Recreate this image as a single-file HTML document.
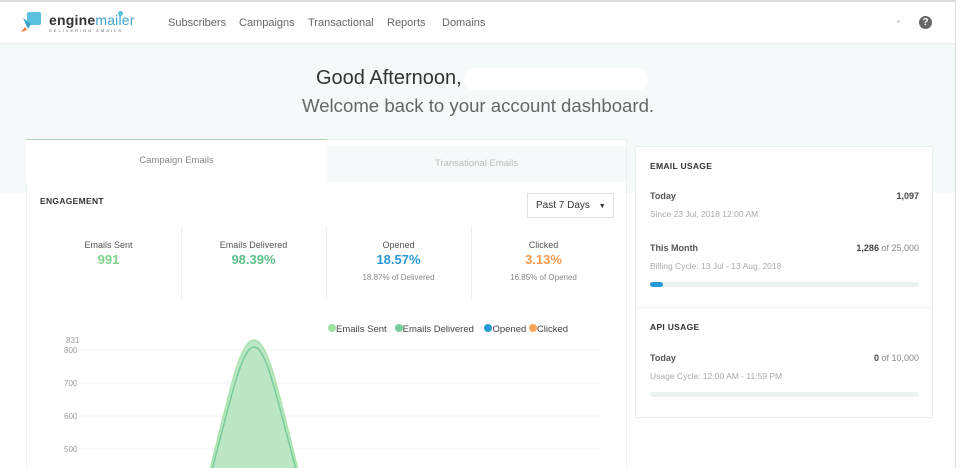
<!DOCTYPE html>
<html><head><style>
*{margin:0;padding:0;box-sizing:border-box}
html,body{width:960px;height:468px;overflow:hidden}
body{background:#fff;font-family:"Liberation Sans",sans-serif;position:relative;color:#555}
.abs{position:absolute}
</style></head><body>
<div class="abs" style="left:0;top:0;width:960px;height:2px;background:#ddd"></div>
<div class="abs" style="left:0;top:2px;width:960px;height:42px;background:#fff;border-bottom:1px solid #e8eef0"></div>
<div class="abs" style="left:0;top:44px;width:960px;height:149px;background:#f5f9fa"></div>
<div class="abs" style="left:955px;top:0;width:5px;height:468px;background:#fff;border-left:1px solid #ddd"></div>
<svg class="abs" style="left:18px;top:10px" width="28" height="26"><rect x="9" y="2" width="14" height="13" rx="2" fill="#5bc0de"/><path d="M5 8 L13 14 L10 19 Z" fill="#3aa4cc"/><path d="M3 22 L7 17 L9 20 Z" fill="#f07a3a"/></svg>
<div class="abs" style="left:49px;top:12px;font-size:14px;font-weight:bold;color:#333;letter-spacing:0.2px">engine<span style="color:#3aa4cc;font-weight:normal">mailer</span></div>
<div class="abs" style="left:118px;top:11px;width:5px;height:5px;border-radius:50%;background:#5bc0de"></div>
<div class="abs" style="left:49px;top:28px;font-size:4px;letter-spacing:2px;color:#666">DELIVERING EMAILS</div>
<div class="abs" style="top:17px;left:168px;font-size:11px;color:#666">
<span style="position:absolute;left:0">Subscribers</span><span style="position:absolute;left:71px">Campaigns</span><span style="position:absolute;left:140px">Transactional</span><span style="position:absolute;left:219px">Reports</span><span style="position:absolute;left:274px">Domains</span></div>
<div class="abs" style="left:897px;top:21px;width:3px;height:1px;background:#999;transform:rotate(-40deg)"></div>
<div class="abs" style="left:919px;top:16px;width:13px;height:13px;border-radius:50%;background:#666;color:#fff;font-size:10px;font-weight:bold;text-align:center;line-height:13px">?</div>
<div class="abs" style="left:316px;top:67px;font-size:20px;color:#333">Good Afternoon,</div>
<div class="abs" style="left:464px;top:68px;width:184px;height:22px;background:#fff;border-radius:10px"></div>
<div class="abs" style="left:302px;top:95px;font-size:18.6px;color:#666">Welcome back to your account dashboard.</div>
<div class="abs" style="left:26px;top:139px;width:601px;height:340px;background:#fff;border:1px solid #eceff0"></div>
<div class="abs" style="left:26px;top:139px;width:301px;height:44px;background:#fff;border-top:1px solid #a8d8b0;text-align:center;font-size:9.5px;color:#888;line-height:42px">Campaign Emails</div>
<div class="abs" style="left:327px;top:146px;width:299px;height:36px;background:#f5f9fa;text-align:center;font-size:9.5px;color:#bbb;line-height:36px">Transational Emails</div>
<div class="abs" style="left:40px;top:196px;font-size:8.5px;font-weight:bold;color:#333;letter-spacing:0.3px">ENGAGEMENT</div>
<div class="abs" style="left:527px;top:193px;width:87px;height:25px;border:1px solid #e2e2e2;font-size:10px;color:#333;line-height:23px;padding-left:8px">Past 7 Days <span style="font-size:7px;margin-left:6px">▼</span></div>
<div class="abs" style="left:181px;top:226px;width:1px;height:74px;background:#eee"></div>
<div class="abs" style="left:326px;top:226px;width:1px;height:74px;background:#eee"></div>
<div class="abs" style="left:471px;top:226px;width:1px;height:74px;background:#eee"></div>
<div class="abs" style="left:36px;top:240px;width:145px;text-align:center"><div style="font-size:9px;color:#555">Emails Sent</div><div style="font-size:13px;font-weight:bold;color:#7fd38a;margin-top:2px">991</div></div>
<div class="abs" style="left:181px;top:240px;width:145px;text-align:center"><div style="font-size:9px;color:#555">Emails Delivered</div><div style="font-size:13px;font-weight:bold;color:#5cc08a;margin-top:2px">98.39%</div></div>
<div class="abs" style="left:326px;top:240px;width:145px;text-align:center"><div style="font-size:9px;color:#555">Opened</div><div style="font-size:13px;font-weight:bold;color:#2a9ad6;margin-top:2px">18.57%</div><div style="font-size:8px;color:#888;margin-top:6px">18.87% of Delivered</div></div>
<div class="abs" style="left:471px;top:240px;width:145px;text-align:center"><div style="font-size:9px;color:#555">Clicked</div><div style="font-size:13px;font-weight:bold;color:#f79a50;margin-top:2px">3.13%</div><div style="font-size:8px;color:#888;margin-top:6px">16.85% of Opened</div></div>
<div class="abs" style="left:328px;top:324px;font-size:9.5px;color:#444;white-space:nowrap">
<span style="display:inline-block;width:8px;height:8px;border-radius:50%;background:#9de3a0"></span>Emails Sent &nbsp;&nbsp;<span style="display:inline-block;width:8px;height:8px;border-radius:50%;background:#77cc99"></span>Emails Delivered &nbsp;&nbsp;&nbsp;<span style="display:inline-block;width:8px;height:8px;border-radius:50%;background:#2a9ad6"></span>Opened <span style="display:inline-block;width:8px;height:8px;border-radius:50%;background:#f9a55a"></span>Clicked</div>
<svg class="abs" style="left:30px;top:330px" width="580" height="140">
<g font-family="Liberation Sans" font-size="8" fill="#999">
<text x="36" y="13">831</text><text x="34" y="23">800</text><text x="34" y="56">700</text><text x="34" y="89">600</text><text x="34" y="122">500</text></g>
<g stroke="#f0f0f0"><line x1="44" y1="20" x2="570" y2="20"/><line x1="44" y1="53" x2="570" y2="53"/><line x1="44" y1="86" x2="570" y2="86"/><line x1="44" y1="119" x2="570" y2="119"/></g>
<path d="M180 140 C200 60 210 10 224 10 C238 10 248 60 268 140 Z" fill="#bce6c6" stroke="#a8e4ac" stroke-width="1.5"/>
<path d="M182 140 C202 64 212 17 224 17 C236 17 246 64 266 140" fill="none" stroke="#77cc99" stroke-width="1.5"/>
</svg>
<div class="abs" style="left:635px;top:146px;width:298px;height:272px;background:#fff;border:1px solid #eceff0"></div>
<div class="abs" style="left:635px;top:307px;width:298px;height:1px;background:#eef1f2"></div>
<div class="abs" style="left:650px;top:161px;font-size:8.5px;font-weight:bold;color:#333;letter-spacing:0.3px">EMAIL USAGE</div>
<div class="abs" style="left:650px;top:191px;font-size:9px;font-weight:bold;color:#555">Today</div>
<div class="abs" style="left:650px;top:191px;width:269px;text-align:right;font-size:9px;font-weight:bold;color:#444">1,097</div>
<div class="abs" style="left:650px;top:209px;font-size:8.5px;color:#aaa">Since 23 Jul, 2018 12:00 AM</div>
<div class="abs" style="left:650px;top:243px;font-size:9px;font-weight:bold;color:#555">This Month</div>
<div class="abs" style="left:650px;top:243px;width:269px;text-align:right;font-size:9px;color:#888"><b style="color:#444">1,286</b> of 25,000</div>
<div class="abs" style="left:650px;top:261px;font-size:8.5px;color:#aaa">Billing Cycle: 13 Jul - 13 Aug, 2018</div>
<div class="abs" style="left:650px;top:282px;width:269px;height:5px;border-radius:3px;background:#ecf1f2"><div style="width:13px;height:5px;border-radius:3px;background:#2a9ad6"></div></div>
<div class="abs" style="left:650px;top:322px;font-size:8.5px;font-weight:bold;color:#333;letter-spacing:0.3px">API USAGE</div>
<div class="abs" style="left:650px;top:353px;font-size:9px;font-weight:bold;color:#555">Today</div>
<div class="abs" style="left:650px;top:353px;width:269px;text-align:right;font-size:9px;color:#888"><b style="color:#444">0</b> of 10,000</div>
<div class="abs" style="left:650px;top:371px;font-size:8.5px;color:#aaa">Usage Cycle: 12:00 AM - 11:59 PM</div>
<div class="abs" style="left:650px;top:392px;width:269px;height:5px;border-radius:3px;background:#ecf1f2"></div>
</body></html>
